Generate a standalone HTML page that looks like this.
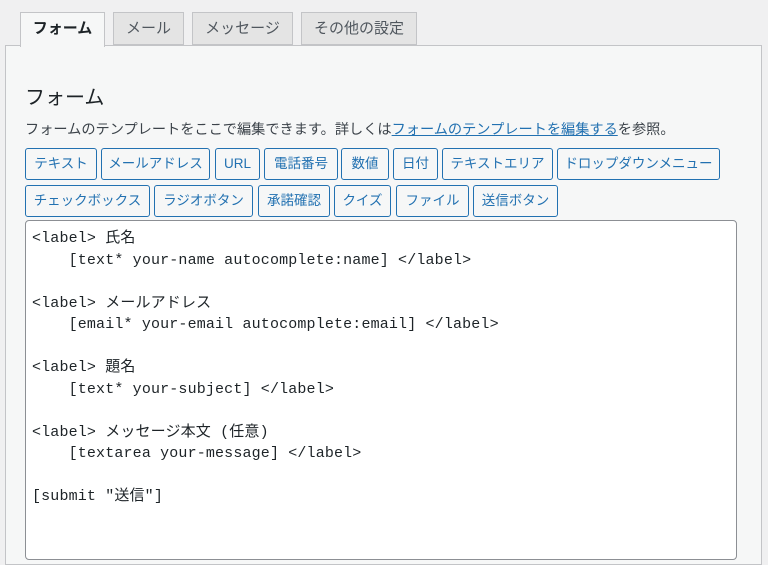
<!DOCTYPE html>
<html><head><meta charset="utf-8"><style>
body{margin:0;width:768px;height:551px;overflow:hidden;background:#f0f0f1;font-family:"Liberation Sans","Noto Sans CJK JP",sans-serif;color:#3c434a;position:relative}
.tab{position:absolute;top:12px;height:33px;border:1px solid #c3c4c7;background:#e4e4e4;box-sizing:border-box;font-size:15px;line-height:32px;text-align:center;color:#50575e}
.tab.a{background:#f6f7f7;height:35px;border-bottom:none;color:#1d2327;font-weight:bold;z-index:2}
.panel{position:absolute;left:5px;top:45px;width:757px;height:520px;border:1px solid #c3c4c7;background:#f6f7f7;box-sizing:border-box}
h2{position:absolute;left:25px;top:81px;margin:0;font-size:20px;font-weight:normal;color:#1d2327}
.desc{position:absolute;left:25px;top:119px;font-size:14.2px;color:#3c434a;white-space:nowrap}
.desc a{color:#2271b1;text-decoration:underline}
.b{position:absolute;height:32px;border:1px solid #2271b1;border-radius:3px;box-sizing:border-box;background:#f6f7f7;color:#2271b1;font-size:13.5px;line-height:30px;text-align:center;white-space:nowrap}
.ta{position:absolute;left:25px;top:220px;width:712px;height:340px;background:#fff;border:1px solid #8c8f94;border-radius:4px;box-sizing:border-box;font-family:"Liberation Mono","Noto Sans CJK JP",monospace;font-size:15px;line-height:21.5px;color:#1d2327;padding:7px 0 0 6px;white-space:pre;letter-spacing:0.15px}
</style></head><body>
<div class="panel"></div>
<div class="tab a" style="left:20px;width:85px">フォーム</div>
<div class="tab" style="left:113px;width:71px">メール</div>
<div class="tab" style="left:192px;width:101px">メッセージ</div>
<div class="tab" style="left:301px;width:116px">その他の設定</div>
<h2>フォーム</h2>
<div class="desc">フォームのテンプレートをここで編集できます。詳しくは<a>フォームのテンプレートを編集する</a>を参照。</div>
<div class="b" style="left:25px;top:148px;width:72px">テキスト</div>
<div class="b" style="left:101px;top:148px;width:109px">メールアドレス</div>
<div class="b" style="left:215px;top:148px;width:45px">URL</div>
<div class="b" style="left:264px;top:148px;width:74px">電話番号</div>
<div class="b" style="left:341px;top:148px;width:48px">数値</div>
<div class="b" style="left:393px;top:148px;width:45px">日付</div>
<div class="b" style="left:442px;top:148px;width:111px">テキストエリア</div>
<div class="b" style="left:557px;top:148px;width:163px">ドロップダウンメニュー</div>
<div class="b" style="left:25px;top:185px;width:125px">チェックボックス</div>
<div class="b" style="left:154px;top:185px;width:99px">ラジオボタン</div>
<div class="b" style="left:258px;top:185px;width:72px">承諾確認</div>
<div class="b" style="left:334px;top:185px;width:57px">クイズ</div>
<div class="b" style="left:396px;top:185px;width:73px">ファイル</div>
<div class="b" style="left:473px;top:185px;width:85px">送信ボタン</div>
<div class="ta">&lt;label&gt; 氏名
    [text* your-name autocomplete:name] &lt;/label&gt;

&lt;label&gt; メールアドレス
    [email* your-email autocomplete:email] &lt;/label&gt;

&lt;label&gt; 題名
    [text* your-subject] &lt;/label&gt;

&lt;label&gt; メッセージ本文 (任意)
    [textarea your-message] &lt;/label&gt;

[submit "送信"]</div>
</body></html>
